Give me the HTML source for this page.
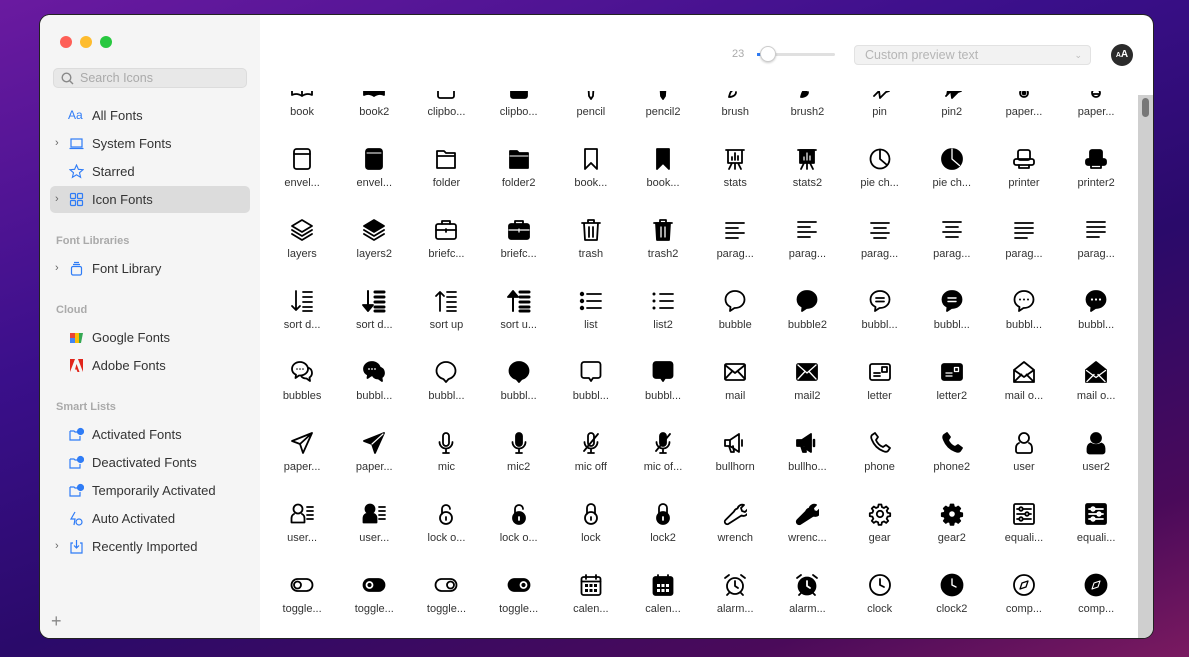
<!DOCTYPE html>
<html><head><meta charset="utf-8"><style>
*{margin:0;padding:0;box-sizing:border-box}
html,body{width:1189px;height:657px;overflow:hidden}
body{background:linear-gradient(160deg,#6a1aa0 0%,#3a0f8a 35%,#2a0a6a 60%,#4a0a5a 85%,#7a1a60 100%);font-family:"Liberation Sans",sans-serif;position:relative}
.win{position:absolute;left:40px;top:15px;width:1113px;height:623px;border-radius:10px;overflow:hidden;background:#fff;box-shadow:0 0 0 1px #222}
.side{position:absolute;left:0;top:0;width:220px;height:623px;background:#f5f5f5}
.tl{position:absolute;top:21px;width:12px;height:12px;border-radius:50%}
.search{position:absolute;left:13px;top:53px;width:194px;height:20px;background:#e8e8e8;border:1px solid #dcdcdc;border-radius:5px;color:#aaa;font-size:12.5px;line-height:18px;padding-left:26px}
.it{position:absolute;left:10px;width:200px;height:27px;font-size:13px;color:#333;line-height:27px;padding-left:42px;border-radius:5px}
.it .ic{position:absolute;left:19px;top:6px;width:15px;height:15px}
.it .ch{position:absolute;left:5px;top:0;color:#666;font-size:11px}
.hd{position:absolute;left:16px;font-size:11px;color:#aaa;font-weight:bold}
.main{position:absolute;left:220px;top:0;right:0;bottom:0}
.clip{position:absolute;left:0;top:76px;width:878px;height:547px;overflow:hidden}
.grid{position:absolute;left:6px;top:-15px;display:grid;grid-template-columns:repeat(12,72.2px);grid-auto-rows:71px}
.c{position:relative;text-align:center}
.c svg{width:24px;height:24px;display:block;margin:0 auto;fill:none;stroke:#000;stroke-width:1.8;stroke-linecap:round;stroke-linejoin:round}
.c span{position:absolute;left:0;right:0;top:30px;font-size:11px;line-height:12px;color:#333}
.f{fill:#000}
.w{stroke:#fff}
.sb{position:absolute;left:878px;top:80px;width:15px;height:543px;background:#cfcfcf}
.th{position:absolute;left:4px;top:3px;width:7px;height:19px;border-radius:4px;background:#777}
</style></head><body>
<div class="win">
<div class="side">
<div class="tl" style="left:20px;background:#fe5f57"></div>
<div class="tl" style="left:40px;background:#febc2e"></div>
<div class="tl" style="left:60px;background:#28c840"></div>
<div class="search"><svg style="position:absolute;left:7px;top:3px" width="13" height="13" viewBox="0 0 13 13" fill="none" stroke="#888" stroke-width="1.4"><circle cx="5.5" cy="5.5" r="4.3"/><path d="M8.7 8.7l3.3 3.3"/></svg>Search Icons</div>
<div class="it" style="top:87px"><span class="ic" style="color:#2f7cf6;font-size:12px;line-height:15px;left:18px">Aa</span>All Fonts</div>
<div class="it" style="top:115px"><span class="ch">›</span><svg class="ic" viewBox="0 0 15 15" fill="none" stroke="#2f7cf6" stroke-width="1.2"><rect x="2" y="3" width="11" height="8"/><path d="M0.5 12.5h14"/></svg>System Fonts</div>
<div class="it" style="top:143px"><svg class="ic" viewBox="0 0 15 15" fill="none" stroke="#2f7cf6" stroke-width="1.1"><path d="M7.5 1l1.9 4.3 4.6.4-3.5 3 1.1 4.6-4.1-2.5-4.1 2.5 1.1-4.6-3.5-3 4.6-.4z"/></svg>Starred</div>
<div class="it" style="top:171px;background:#dcdcdc"><span class="ch">›</span><svg class="ic" viewBox="0 0 15 15" fill="none" stroke="#2f7cf6" stroke-width="1.2"><rect x="1.5" y="1.5" width="5" height="5" rx="1"/><rect x="8.5" y="1.5" width="5" height="5" rx="1"/><rect x="1.5" y="8.5" width="5" height="5" rx="1"/><rect x="8.5" y="8.5" width="5" height="5" rx="1"/></svg>Icon Fonts</div>
<div class="hd" style="top:220px">Font Libraries</div>
<div class="it" style="top:240px"><span class="ch">›</span><svg class="ic" viewBox="0 0 15 15" fill="none" stroke="#2f7cf6" stroke-width="1.2"><path d="M5 1.5h5M4 3.5h7"/><rect x="2.5" y="5.5" width="10" height="8.5" rx="1.5"/></svg>Font Library</div>
<div class="hd" style="top:289px">Cloud</div>
<div class="it" style="top:309px"><svg class="ic" viewBox="0 0 15 15"><rect x="1" y="3" width="5" height="5" fill="#ea4335"/><rect x="1" y="8" width="5" height="5" fill="#4285f4"/><rect x="6" y="3" width="4" height="10" fill="#fbbc05"/><path d="M10 3h4l-2 10h-2z" fill="#34a853"/></svg>Google Fonts</div>
<div class="it" style="top:337px"><svg class="ic" viewBox="0 0 15 15"><path d="M1 1h5L1 14zM9 1h5v13zM7.5 6l3 8h-2l-1-2.5H6z" fill="#e1251b"/></svg>Adobe Fonts</div>
<div class="hd" style="top:386px">Smart Lists</div>
<div class="it" style="top:406px"><svg class="ic" viewBox="0 0 15 15" fill="none" stroke="#2f7cf6" stroke-width="1.2"><path d="M1 4h4l1 1h3M1 4v9h10V9"/><circle cx="11.5" cy="4.5" r="3" fill="#2f7cf6"/></svg>Activated Fonts</div>
<div class="it" style="top:434px"><svg class="ic" viewBox="0 0 15 15" fill="none" stroke="#2f7cf6" stroke-width="1.2"><path d="M1 4h4l1 1h3M1 4v9h10V9"/><circle cx="11.5" cy="4.5" r="3" fill="#2f7cf6"/></svg>Deactivated Fonts</div>
<div class="it" style="top:462px"><svg class="ic" viewBox="0 0 15 15" fill="none" stroke="#2f7cf6" stroke-width="1.2"><path d="M1 4h4l1 1h3M1 4v9h10V9"/><circle cx="11.5" cy="4.5" r="3" fill="#2f7cf6"/></svg>Temporarily Activated</div>
<div class="it" style="top:490px"><svg class="ic" viewBox="0 0 15 15" fill="none" stroke="#2f7cf6" stroke-width="1.2"><path d="M6 1L2 8h4l-1 6"/><circle cx="10" cy="11" r="3"/></svg>Auto Activated</div>
<div class="it" style="top:518px"><span class="ch">›</span><svg class="ic" viewBox="0 0 15 15" fill="none" stroke="#2f7cf6" stroke-width="1.2"><path d="M4 4H2v10h11V4h-2M7.5 1v8M5 6.5l2.5 2.5 2.5-2.5"/></svg>Recently Imported</div>
<div style="position:absolute;left:11px;top:596px;color:#888;font-size:18px">+</div>
</div>
<div class="main">
<div style="position:absolute;left:472px;top:33px;font-size:11px;color:#aaa">23</div>
<div style="position:absolute;left:497px;top:38px;width:78px;height:3px;background:#e0e0e0;border-radius:2px"><div style="width:8px;height:3px;background:#2f7cf6"></div></div>
<div style="position:absolute;left:500px;top:31px;width:16px;height:16px;border-radius:50%;background:#fff;border:1px solid #ccc;box-shadow:0 1px 2px rgba(0,0,0,.2)"></div>
<div style="position:absolute;left:594px;top:30px;width:237px;height:20px;background:#f2f2f2;border:1px solid #e2e2e2;border-radius:4px;font-size:12.5px;color:#b5b5b5;line-height:19px;padding-left:10px">Custom preview text<span style="position:absolute;right:8px;top:0;font-size:9px;color:#bbb">⌄</span></div>
<div style="position:absolute;left:851px;top:29px;width:22px;height:22px;border-radius:50%;background:#2b2b2b;color:#fff;font-size:10px;font-weight:bold;line-height:22px;text-align:center"><span style="font-size:7px">A</span>A</div>
<div class="clip"><div class="grid">
<div class="c"><svg viewBox="0 0 24 24"><path d="M2 5c4-2 7-1 10 1 3-2 6-3 10-1v14c-4-2-7-1-10 1-3-2-6-3-10-1zM12 6v14"/></svg><span>book</span></div>
<div class="c"><svg viewBox="0 0 24 24"><path class="f" d="M2 5c4-2 7-1 10 1 3-2 6-3 10-1v14c-4-2-7-1-10 1-3-2-6-3-10-1z"/></svg><span>book2</span></div>
<div class="c"><svg viewBox="0 0 24 24"><rect x="4" y="4" width="16" height="18" rx="2"/><rect x="8" y="2" width="8" height="4"/></svg><span>clipbo...</span></div>
<div class="c"><svg viewBox="0 0 24 24"><rect class="f" x="4" y="4" width="16" height="18" rx="2"/></svg><span>clipbo...</span></div>
<div class="c"><svg viewBox="0 0 24 24"><path d="M9 4l6 0-1 16-2 3-2-3z"/></svg><span>pencil</span></div>
<div class="c"><svg viewBox="0 0 24 24"><path class="f" d="M9 4l6 0-1 16-2 3-2-3z"/></svg><span>pencil2</span></div>
<div class="c"><svg viewBox="0 0 24 24"><path d="M18 2l-7 12M11 14c-3 0-4 3-5 7 4 0 7-2 7-5"/></svg><span>brush</span></div>
<div class="c"><svg viewBox="0 0 24 24"><path d="M18 2l-7 12M11 14c-3 0-4 3-5 7 4 0 7-2 7-5" class="f"/></svg><span>brush2</span></div>
<div class="c"><svg viewBox="0 0 24 24"><path d="M9 3l12 12-3 1-6 6-1-7-5 5M9 3l-1 3 6 6"/></svg><span>pin</span></div>
<div class="c"><svg viewBox="0 0 24 24"><path class="f" d="M9 3l12 12-3 1-6 6-1-7-5 5"/></svg><span>pin2</span></div>
<div class="c"><svg viewBox="0 0 24 24"><circle cx="12" cy="17" r="4"/><circle cx="12" cy="17" r="1.5" class="f"/></svg><span>paper...</span></div>
<div class="c"><svg viewBox="0 0 24 24"><circle cx="12" cy="17" r="4"/><path d="M9 18h6"/></svg><span>paper...</span></div>

<div class="c"><svg viewBox="0 0 24 24"><rect x="4" y="2" width="16" height="20" rx="2.5"/><path d="M4 7h16"/></svg><span>envel...</span></div>
<div class="c"><svg viewBox="0 0 24 24"><rect class="f" x="4" y="2" width="16" height="20" rx="2.5"/><path class="w" d="M5 6h14" stroke-width="1"/></svg><span>envel...</span></div>
<div class="c"><svg viewBox="0 0 24 24"><path d="M3 4h7l2 2h9v15H3zM3 9h18"/></svg><span>folder</span></div>
<div class="c"><svg viewBox="0 0 24 24"><path class="f" d="M3 4h7l2 2h9v15H3z"/><path class="w" d="M3 9h18" stroke-width="1"/></svg><span>folder2</span></div>
<div class="c"><svg viewBox="0 0 24 24"><path d="M6 2h12v20l-6-6-6 6z"/></svg><span>book...</span></div>
<div class="c"><svg viewBox="0 0 24 24"><path class="f" d="M6 2h12v20l-6-6-6 6z"/></svg><span>book...</span></div>
<div class="c"><svg viewBox="0 0 24 24"><path d="M3 3h18M5 3v13h14V3M9 16l-3 6M15 16l3 6M12 16v6M9 13V10M12 13V6M15 13V9"/></svg><span>stats</span></div>
<div class="c"><svg viewBox="0 0 24 24"><path d="M3 3h18M9 16l-3 6M15 16l3 6M12 16v6"/><rect class="f" x="5" y="3" width="14" height="13"/><path class="w" d="M9 13V10M12 13V6M15 13V9" stroke-width="1.2"/></svg><span>stats2</span></div>
<div class="c"><svg viewBox="0 0 24 24"><circle cx="12" cy="12" r="9.5"/><path d="M12 2.5V12l7 6"/></svg><span>pie ch...</span></div>
<div class="c"><svg viewBox="0 0 24 24"><circle class="f" cx="12" cy="12" r="10"/><path class="w" d="M12 2V12l7.5 6.5" stroke-width="1.3"/></svg><span>pie ch...</span></div>
<div class="c"><svg viewBox="0 0 24 24"><rect x="6" y="3" width="12" height="10" rx="2"/><rect x="2" y="12" width="20" height="6" rx="2"/><path d="M7 18v3h10v-3"/></svg><span>printer</span></div>
<div class="c"><svg viewBox="0 0 24 24"><rect class="f" x="6" y="3" width="12" height="10" rx="2"/><rect class="f" x="2" y="12" width="20" height="6" rx="2"/><path d="M7 18v3h10v-3"/></svg><span>printer2</span></div>

<div class="c"><svg viewBox="0 0 24 24"><path d="M12 2l10 6-10 6-10-6zM2 12l10 6 10-6M2 16l10 6 10-6"/></svg><span>layers</span></div>
<div class="c"><svg viewBox="0 0 24 24"><path class="f" d="M12 2l10 6-10 6-10-6z"/><path d="M2 12l10 6 10-6M2 16l10 6 10-6"/></svg><span>layers2</span></div>
<div class="c"><svg viewBox="0 0 24 24"><rect x="2" y="6" width="20" height="15" rx="2"/><path d="M8 6V3h8v3M2 12h20M12 11v3"/></svg><span>briefc...</span></div>
<div class="c"><svg viewBox="0 0 24 24"><rect class="f" x="2" y="6" width="20" height="15" rx="2"/><path d="M8 6V3h8v3"/><path class="w" d="M2 12h20M12 11v3" stroke-width="1.2"/></svg><span>briefc...</span></div>
<div class="c"><svg viewBox="0 0 24 24"><path d="M3 5h18M9 5V2h6v3M5 5l1 17h12l1-17M10 9v10M14 9v10"/></svg><span>trash</span></div>
<div class="c"><svg viewBox="0 0 24 24"><path d="M3 5h18M9 5V2h6v3"/><path class="f" d="M5 5l1 17h12l1-17z"/><path class="w" d="M10 9v10M14 9v10" stroke-width="1.3"/></svg><span>trash2</span></div>
<div class="c"><svg viewBox="0 0 24 24" stroke-width="1.6"><path d="M3 5h18M3 10h12M3 15h18M3 20h12"/></svg><span>parag...</span></div>
<div class="c"><svg viewBox="0 0 24 24" stroke-width="3"><path d="M3 4h18M3 9h12M3 14h18M3 19h12"/></svg><span>parag...</span></div>
<div class="c"><svg viewBox="0 0 24 24" stroke-width="1.6"><path d="M3 5h18M6 10h12M3 15h18M6 20h12"/></svg><span>parag...</span></div>
<div class="c"><svg viewBox="0 0 24 24" stroke-width="3"><path d="M3 4h18M6 9h12M3 14h18M6 19h12"/></svg><span>parag...</span></div>
<div class="c"><svg viewBox="0 0 24 24" stroke-width="1.6"><path d="M3 5h18M3 10h18M3 15h18M3 20h12"/></svg><span>parag...</span></div>
<div class="c"><svg viewBox="0 0 24 24" stroke-width="3"><path d="M3 4h18M3 9h18M3 14h18M3 19h12"/></svg><span>parag...</span></div>

<div class="c"><svg viewBox="0 0 24 24" stroke-width="1.6"><path d="M6 2v19M2 17l4 4 4-4M13 3h9M13 8h9M13 13h9M13 18h9M13 22h9"/></svg><span>sort d...</span></div>
<div class="c"><svg viewBox="0 0 24 24"><path d="M6 2v17" stroke-width="2"/><path class="f" d="M1 16h10l-5 6z"/><path d="M13 3h9M13 8h9M13 13h9M13 18h9M13 22h9" stroke-width="3"/></svg><span>sort d...</span></div>
<div class="c"><svg viewBox="0 0 24 24" stroke-width="1.6"><path d="M6 22V3M2 7l4-4 4 4M13 3h9M13 8h9M13 13h9M13 18h9M13 22h9"/></svg><span>sort up</span></div>
<div class="c"><svg viewBox="0 0 24 24"><path d="M6 22V5" stroke-width="2"/><path class="f" d="M1 8h10L6 2z"/><path d="M13 3h9M13 8h9M13 13h9M13 18h9M13 22h9" stroke-width="3"/></svg><span>sort u...</span></div>
<div class="c"><svg viewBox="0 0 24 24" stroke-width="1.8"><path d="M8 5h14M8 12h14M8 19h14"/><circle class="f" cx="3" cy="5" r="1.3"/><circle class="f" cx="3" cy="12" r="1.3"/><circle class="f" cx="3" cy="19" r="1.3"/></svg><span>list</span></div>
<div class="c"><svg viewBox="0 0 24 24" stroke-width="3.5"><path d="M9 5h13M9 12h13M9 19h13"/><circle class="f" cx="3" cy="5" r=".6"/><circle class="f" cx="3" cy="12" r=".6"/><circle class="f" cx="3" cy="19" r=".6"/></svg><span>list2</span></div>
<div class="c"><svg viewBox="0 0 24 24"><path d="M12 2C6.5 2 2.5 5.8 2.5 10.5c0 3.2 2 6 5 7.4L7 22l4.5-3H12c5.5 0 9.5-3.8 9.5-8.5S17.5 2 12 2z"/></svg><span>bubble</span></div>
<div class="c"><svg viewBox="0 0 24 24"><path class="f" d="M12 2C6.5 2 2.5 5.8 2.5 10.5c0 3.2 2 6 5 7.4L7 22l4.5-3H12c5.5 0 9.5-3.8 9.5-8.5S17.5 2 12 2z"/></svg><span>bubble2</span></div>
<div class="c"><svg viewBox="0 0 24 24"><path d="M12 2C6.5 2 2.5 5.8 2.5 10.5c0 3.2 2 6 5 7.4L7 22l4.5-3H12c5.5 0 9.5-3.8 9.5-8.5S17.5 2 12 2zM8 9h8M8 12.5h8"/></svg><span>bubbl...</span></div>
<div class="c"><svg viewBox="0 0 24 24"><path class="f" d="M12 2C6.5 2 2.5 5.8 2.5 10.5c0 3.2 2 6 5 7.4L7 22l4.5-3H12c5.5 0 9.5-3.8 9.5-8.5S17.5 2 12 2z"/><path class="w" d="M8 9h8M8 12.5h8" stroke-width="1.4"/></svg><span>bubbl...</span></div>
<div class="c"><svg viewBox="0 0 24 24"><path d="M12 2C6.5 2 2.5 5.8 2.5 10.5c0 3.2 2 6 5 7.4L7 22l4.5-3H12c5.5 0 9.5-3.8 9.5-8.5S17.5 2 12 2z"/><circle class="f" cx="8" cy="10.5" r="1" stroke="none"/><circle class="f" cx="12" cy="10.5" r="1" stroke="none"/><circle class="f" cx="16" cy="10.5" r="1" stroke="none"/></svg><span>bubbl...</span></div>
<div class="c"><svg viewBox="0 0 24 24"><path class="f" d="M12 2C6.5 2 2.5 5.8 2.5 10.5c0 3.2 2 6 5 7.4L7 22l4.5-3H12c5.5 0 9.5-3.8 9.5-8.5S17.5 2 12 2z"/><circle fill="#fff" cx="8" cy="10.5" r="1.1" stroke="none"/><circle fill="#fff" cx="12" cy="10.5" r="1.1" stroke="none"/><circle fill="#fff" cx="16" cy="10.5" r="1.1" stroke="none"/></svg><span>bubbl...</span></div>

<div class="c"><svg viewBox="0 0 24 24" stroke-width="1.6"><path d="M10 2C5.5 2 2 5 2 9c0 2.5 1.5 4.5 4 5.7L5.5 18l3.5-2.5h1c4.5 0 8-3 8-6.5S14.5 2 10 2zM19 8c2 1 3 3 3 5 0 2-1 3.5-2.5 4.5L20 21l-3.5-2.5c-2 0-4-.8-5-2"/><circle class="f" cx="7" cy="9" r=".8" stroke="none"/><circle class="f" cx="10" cy="9" r=".8" stroke="none"/><circle class="f" cx="13" cy="9" r=".8" stroke="none"/></svg><span>bubbles</span></div>
<div class="c"><svg viewBox="0 0 24 24" stroke-width="1.6"><path class="f" d="M10 2C5.5 2 2 5 2 9c0 2.5 1.5 4.5 4 5.7L5.5 18l3.5-2.5h1c4.5 0 8-3 8-6.5S14.5 2 10 2z"/><path class="f" d="M19 8c2 1 3 3 3 5 0 2-1 3.5-2.5 4.5L20 21l-3.5-2.5c-2 0-4-.8-5-2"/><circle fill="#fff" cx="7" cy="9" r=".9" stroke="none"/><circle fill="#fff" cx="10" cy="9" r=".9" stroke="none"/><circle fill="#fff" cx="13" cy="9" r=".9" stroke="none"/></svg><span>bubbl...</span></div>
<div class="c"><svg viewBox="0 0 24 24"><path d="M12 2c-5.5 0-9.5 4-9.5 8.8 0 4 3 7.3 7 8.3L12 22l2.5-2.9c4-1 7-4.3 7-8.3C21.5 6 17.5 2 12 2z"/></svg><span>bubbl...</span></div>
<div class="c"><svg viewBox="0 0 24 24"><path class="f" d="M12 2c-5.5 0-9.5 4-9.5 8.8 0 4 3 7.3 7 8.3L12 22l2.5-2.9c4-1 7-4.3 7-8.3C21.5 6 17.5 2 12 2z"/></svg><span>bubbl...</span></div>
<div class="c"><svg viewBox="0 0 24 24"><path d="M5 2h14a2.5 2.5 0 0 1 2.5 2.5v11A2.5 2.5 0 0 1 19 18h-5l-2 3-2-3H5a2.5 2.5 0 0 1-2.5-2.5v-11A2.5 2.5 0 0 1 5 2z"/></svg><span>bubbl...</span></div>
<div class="c"><svg viewBox="0 0 24 24"><path class="f" d="M5 2h14a2.5 2.5 0 0 1 2.5 2.5v11A2.5 2.5 0 0 1 19 18h-5l-2 3-2-3H5a2.5 2.5 0 0 1-2.5-2.5v-11A2.5 2.5 0 0 1 5 2z"/></svg><span>bubbl...</span></div>
<div class="c"><svg viewBox="0 0 24 24"><rect x="2" y="4" width="20" height="16" rx="1.5"/><path d="M2 5l10 8 10-8M2 19l7.5-8M22 19l-7.5-8"/></svg><span>mail</span></div>
<div class="c"><svg viewBox="0 0 24 24"><rect class="f" x="2" y="4" width="20" height="16" rx="1.5"/><path class="w" d="M3 5l9 8 9-8M3 19l7-7.5M21 19l-7-7.5" stroke-width="1.3"/></svg><span>mail2</span></div>
<div class="c"><svg viewBox="0 0 24 24"><rect x="2" y="4" width="20" height="16" rx="2"/><path d="M6 13h6M6 16h6"/><rect x="14" y="7" width="5" height="5"/></svg><span>letter</span></div>
<div class="c"><svg viewBox="0 0 24 24"><rect class="f" x="2" y="4" width="20" height="16" rx="2"/><path class="w" d="M6 13h6M6 16h6" stroke-width="1.3"/><rect class="w" x="14.5" y="7.5" width="4" height="4" stroke-width="1.3"/></svg><span>letter2</span></div>
<div class="c"><svg viewBox="0 0 24 24"><path d="M2 10l10-8 10 8v12H2zM2 10l10 7 10-7M2 22l7.5-7.5M22 22l-7.5-7.5"/></svg><span>mail o...</span></div>
<div class="c"><svg viewBox="0 0 24 24"><path class="f" d="M2 10l10-8 10 8v12H2z"/><path class="w" d="M2.5 10.5l9.5 7 9.5-7M3 21.5l7-7M21 21.5l-7-7" stroke-width="1.3"/></svg><span>mail o...</span></div>

<div class="c"><svg viewBox="0 0 24 24"><path d="M22 2L2 10l8 3 3 9zM10 13l12-11"/></svg><span>paper...</span></div>
<div class="c"><svg viewBox="0 0 24 24"><path class="f" d="M22 2L2 10l8 3 3 9z"/><path class="w" d="M10 13l11-10" stroke-width="1.2"/></svg><span>paper...</span></div>
<div class="c"><svg viewBox="0 0 24 24"><rect x="9" y="2" width="6" height="13" rx="3"/><path d="M5.5 11a6.5 6.5 0 0 0 13 0M12 17.5V22M9 22h6"/></svg><span>mic</span></div>
<div class="c"><svg viewBox="0 0 24 24"><rect class="f" x="9" y="2" width="6" height="13" rx="3"/><path d="M5.5 11a6.5 6.5 0 0 0 13 0M12 17.5V22M9 22h6"/></svg><span>mic2</span></div>
<div class="c"><svg viewBox="0 0 24 24"><rect x="9" y="2" width="6" height="13" rx="3"/><path d="M5.5 11a6.5 6.5 0 0 0 13 0M12 17.5V22M9 22h6M5 20L19 3"/></svg><span>mic off</span></div>
<div class="c"><svg viewBox="0 0 24 24"><rect class="f" x="9" y="2" width="6" height="13" rx="3"/><path d="M5.5 11a6.5 6.5 0 0 0 13 0M12 17.5V22M9 22h6M5 20L19 3"/></svg><span>mic of...</span></div>
<div class="c"><svg viewBox="0 0 24 24"><path d="M2 9h5l9-6v18l-9-6H2zM7 9v6M6 15l2 6h3l-1-6M19 9v6"/></svg><span>bullhorn</span></div>
<div class="c"><svg viewBox="0 0 24 24"><path class="f" d="M2 9h5l9-6v18l-9-6H2zM6 15l2 6h3l-1-6"/><path d="M19 9v6" stroke-width="2.5"/></svg><span>bullho...</span></div>
<div class="c"><svg viewBox="0 0 24 24"><path d="M7 2l3 4-2 3c1 3 4 6 7 7l3-2 4 3-2 3c-1 1-3 1-5 0C10 18 6 14 4 9c-1-2-1-4 0-5z"/></svg><span>phone</span></div>
<div class="c"><svg viewBox="0 0 24 24"><path class="f" d="M7 2l3 4-2 3c1 3 4 6 7 7l3-2 4 3-2 3c-1 1-3 1-5 0C10 18 6 14 4 9c-1-2-1-4 0-5z"/></svg><span>phone2</span></div>
<div class="c"><svg viewBox="0 0 24 24"><circle cx="12" cy="7" r="5"/><path d="M7 12c-2 1-3 3-3 5v3a2 2 0 0 0 2 2h12a2 2 0 0 0 2-2v-3c0-2-1-4-3-5"/></svg><span>user</span></div>
<div class="c"><svg viewBox="0 0 24 24"><circle class="f" cx="12" cy="7" r="5"/><path class="f" d="M6.5 12.5c-2 1-3 3-3 5v3a2 2 0 0 0 2 2h13a2 2 0 0 0 2-2v-3c0-2-1-4-3-5-3 2-8 2-11 0z"/></svg><span>user2</span></div>

<div class="c"><svg viewBox="0 0 24 24"><circle cx="8" cy="7" r="4.5"/><path d="M4 12c-2 1-2.5 2.5-2.5 4.5v4h13v-4c0-2-.5-3.5-2.5-4.5M17 5h6M17 9h6M17 13h6M17 17h6"/></svg><span>user...</span></div>
<div class="c"><svg viewBox="0 0 24 24"><circle class="f" cx="8" cy="7" r="4.5"/><path class="f" d="M4 12c-2 1-2.5 2.5-2.5 4.5v4h13v-4c0-2-.5-3.5-2.5-4.5z"/><path d="M17 5h6M17 9h6M17 13h6M17 17h6"/></svg><span>user...</span></div>
<div class="c"><svg viewBox="0 0 24 24"><path d="M8 12V7a4 4 0 0 1 8 0"/><circle cx="12" cy="16" r="6"/><path d="M12 15v3"/></svg><span>lock o...</span></div>
<div class="c"><svg viewBox="0 0 24 24"><path d="M8 12V7a4 4 0 0 1 8 0"/><circle class="f" cx="12" cy="16" r="6"/><path class="w" d="M12 15v3"/></svg><span>lock o...</span></div>
<div class="c"><svg viewBox="0 0 24 24"><path d="M8 12V6a4 4 0 0 1 8 0v6"/><circle cx="12" cy="16" r="6"/><path d="M12 15v3"/></svg><span>lock</span></div>
<div class="c"><svg viewBox="0 0 24 24"><path d="M8 12V6a4 4 0 0 1 8 0v6"/><circle class="f" cx="12" cy="16" r="6"/><path class="w" d="M12 15v3"/></svg><span>lock2</span></div>
<div class="c"><svg viewBox="0 0 24 24"><path d="M14.5 6.5a5 5 0 0 1 6.5-3.5l-3 3 1 3 3 1 3-3a5 5 0 0 1-6.5 6.5L6 21.5a2 2 0 0 1-3.5-3.5L11 9.5a5 5 0 0 1 3.5-3z"/></svg><span>wrench</span></div>
<div class="c"><svg viewBox="0 0 24 24"><path class="f" d="M14.5 6.5a5 5 0 0 1 6.5-3.5l-3 3 1 3 3 1 3-3a5 5 0 0 1-6.5 6.5L6 21.5a2 2 0 0 1-3.5-3.5L11 9.5a5 5 0 0 1 3.5-3z"/></svg><span>wrenc...</span></div>
<div class="c"><svg viewBox="0 0 24 24"><circle cx="12" cy="12" r="3.2"/><path d="M10.6 2.5h2.8l.5 2.6 2.1.9 2.2-1.5 2 2-1.5 2.2.9 2.1 2.6.5v2.8l-2.6.5-.9 2.1 1.5 2.2-2 2-2.2-1.5-2.1.9-.5 2.6h-2.8l-.5-2.6-2.1-.9-2.2 1.5-2-2 1.5-2.2-.9-2.1-2.6-.5v-2.8l2.6-.5.9-2.1-1.5-2.2 2-2 2.2 1.5 2.1-.9z"/></svg><span>gear</span></div>
<div class="c"><svg viewBox="0 0 24 24"><path class="f" d="M10.6 2.5h2.8l.5 2.6 2.1.9 2.2-1.5 2 2-1.5 2.2.9 2.1 2.6.5v2.8l-2.6.5-.9 2.1 1.5 2.2-2 2-2.2-1.5-2.1.9-.5 2.6h-2.8l-.5-2.6-2.1-.9-2.2 1.5-2-2 1.5-2.2-.9-2.1-2.6-.5v-2.8l2.6-.5.9-2.1-1.5-2.2 2-2 2.2 1.5 2.1-.9z"/><circle cx="12" cy="12" r="2.8" fill="#fff" stroke="none"/></svg><span>gear2</span></div>
<div class="c"><svg viewBox="0 0 24 24" stroke-width="1.5"><rect x="2" y="2" width="20" height="20" rx="1.5"/><path d="M5 7h14M5 12h14M5 17h14"/><circle cx="9" cy="7" r="1.8" fill="#fff"/><circle cx="15" cy="12" r="1.8" fill="#fff"/><circle cx="9" cy="17" r="1.8" fill="#fff"/></svg><span>equali...</span></div>
<div class="c"><svg viewBox="0 0 24 24" stroke-width="1.2"><rect class="f" x="2" y="2" width="20" height="20" rx="1.5"/><path class="w" d="M5 7h14M5 12h14M5 17h14"/><circle class="w" cx="9" cy="7" r="1.8"/><circle class="w" cx="15" cy="12" r="1.8"/><circle class="w" cx="9" cy="17" r="1.8"/></svg><span>equali...</span></div>

<div class="c"><svg viewBox="0 0 24 24"><rect x="1.5" y="6" width="21" height="12" rx="6"/><circle cx="7.5" cy="12" r="3.5"/></svg><span>toggle...</span></div>
<div class="c"><svg viewBox="0 0 24 24"><rect class="f" x="1.5" y="6" width="21" height="12" rx="6"/><circle class="w" cx="7.5" cy="12" r="3"/></svg><span>toggle...</span></div>
<div class="c"><svg viewBox="0 0 24 24"><rect x="1.5" y="6" width="21" height="12" rx="6"/><circle cx="16.5" cy="12" r="3.5"/></svg><span>toggle...</span></div>
<div class="c"><svg viewBox="0 0 24 24"><rect class="f" x="1.5" y="6" width="21" height="12" rx="6"/><circle class="w" cx="16.5" cy="12" r="3"/></svg><span>toggle...</span></div>
<div class="c"><svg viewBox="0 0 24 24"><rect x="2.5" y="4" width="19" height="18" rx="2"/><path d="M7 2v4M17 2v4M2.5 8.5h19"/><g class="f" stroke="none"><rect x="6" y="11" width="3" height="3"/><rect x="10.5" y="11" width="3" height="3"/><rect x="15" y="11" width="3" height="3"/><rect x="6" y="16" width="3" height="3"/><rect x="10.5" y="16" width="3" height="3"/><rect x="15" y="16" width="3" height="3"/></g></svg><span>calen...</span></div>
<div class="c"><svg viewBox="0 0 24 24"><rect class="f" x="2.5" y="4" width="19" height="18" rx="2"/><path d="M7 2v4M17 2v4"/><g fill="#fff" stroke="none"><rect x="6" y="11" width="3" height="3"/><rect x="10.5" y="11" width="3" height="3"/><rect x="15" y="11" width="3" height="3"/><rect x="6" y="16" width="3" height="3"/><rect x="10.5" y="16" width="3" height="3"/><rect x="15" y="16" width="3" height="3"/></g></svg><span>calen...</span></div>
<div class="c"><svg viewBox="0 0 24 24"><circle cx="12" cy="13" r="8"/><path d="M12 8v5l3 2M2 5l4-3M22 5l-4-3M6 20l-2 2M18 20l2 2"/></svg><span>alarm...</span></div>
<div class="c"><svg viewBox="0 0 24 24"><circle class="f" cx="12" cy="13" r="8.5"/><path d="M2 5l4-3M22 5l-4-3M6 20l-2 2M18 20l2 2"/><path class="w" d="M12 8v5l3 2"/></svg><span>alarm...</span></div>
<div class="c"><svg viewBox="0 0 24 24"><circle cx="12" cy="12" r="10"/><path d="M12 6v6l4 2"/></svg><span>clock</span></div>
<div class="c"><svg viewBox="0 0 24 24"><circle class="f" cx="12" cy="12" r="10.5"/><path class="w" d="M12 6v6l4 2" stroke-width="1.4"/></svg><span>clock2</span></div>
<div class="c"><svg viewBox="0 0 24 24"><circle cx="12" cy="12" r="10"/><path d="M16 8l-2 6-6 2 2-6z" stroke-width="1.3"/></svg><span>comp...</span></div>
<div class="c"><svg viewBox="0 0 24 24"><circle class="f" cx="12" cy="12" r="10.5"/><path class="w" d="M16 8l-2 6-6 2 2-6z" stroke-width="1.1"/></svg><span>comp...</span></div>
</div></div>
<div class="sb"><div class="th"></div></div>
</div>
</div>
</body></html>
